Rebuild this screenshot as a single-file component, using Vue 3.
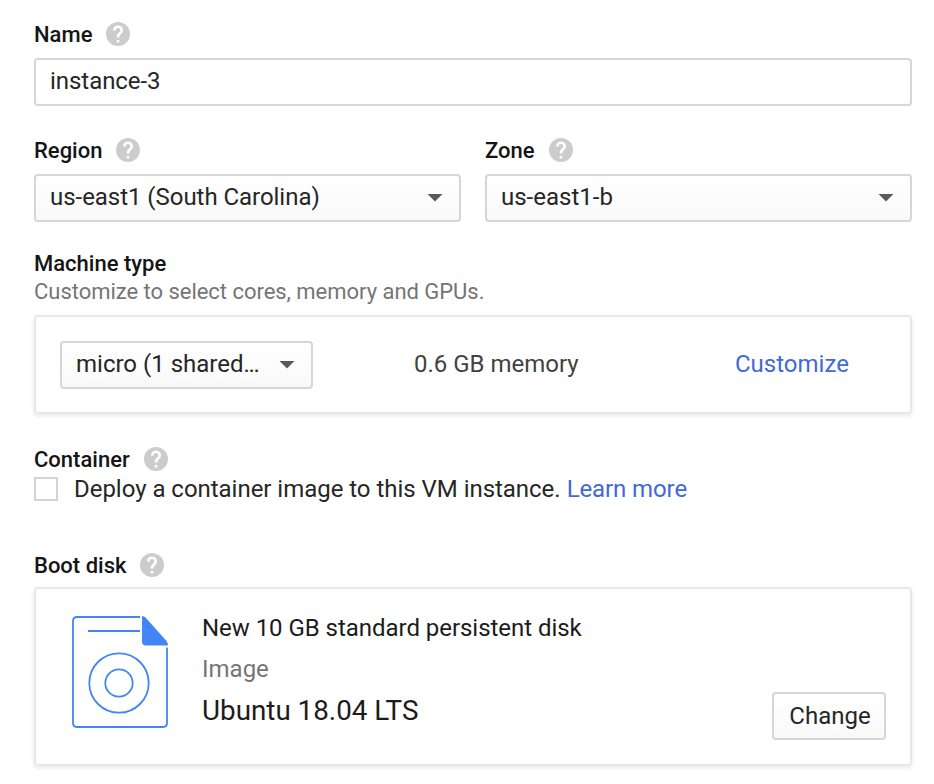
<script setup>
import { h } from 'vue'
const Help = () => h('svg', { class: 'help', viewBox: '0 0 24 24', width: 24, height: 24 }, [
  h('circle', { cx: 12, cy: 12, r: 12, fill: '#ccc' }),
  h('path', { d: 'M13.3 20.4h-2.600V18h2.600zM15.900 11.200l-1.100 1.100c-.9.9-1.400 1.600-1.400 3.300h-2.700V15c0-1.300.5-2.500 1.400-3.400l1.500-1.500c.4-.4.7-1 .7-1.700a2.300 2.300 0 0 0-4.600 0H7a5 5 0 0 1 10 0c0 1.100-.4 2.100-1.100 2.800z', fill: '#fff' })
])
</script>

<template>
  <main class="form">
    <section class="name">
      <div class="label"><span class="lt">Name</span><Help /></div>
      <div class="input"><span class="t v1">instance-3</span></div>
    </section>
    <div class="pair">
      <section>
        <div class="label"><span class="lt">Region</span><Help /></div>
        <div class="input select"><span class="t v2">us-east1 (South Carolina)</span><i class="caret"></i></div>
      </section>
      <section>
        <div class="label"><span class="lt">Zone</span><Help /></div>
        <div class="input select"><span class="t">us-east1-b</span><i class="caret"></i></div>
      </section>
    </div>
    <section class="machine">
      <div class="label"><span>Machine type</span></div>
      <div class="hint">Customize to select cores, memory and GPUs.</div>
      <div class="card mcard">
        <div class="input select micro"><span class="t">micro (1 shared<span class="dots">...</span></span><i class="caret"></i></div>
        <span class="t memory">0.6 GB memory</span>
        <a class="t customize">Customize</a>
      </div>
    </section>
    <section class="container">
      <div class="label"><span class="lt">Container</span><Help /></div>
      <div class="check"><i class="box"></i><span class="t deploy">Deploy a container image to this VM instance.</span><a class="t learn">Learn more</a></div>
    </section>
    <section class="boot">
      <div class="label"><span class="lt">Boot disk</span><Help /></div>
      <div class="card bcard">
        <svg class="disk" width="98" height="114" viewBox="0 0 98 114" fill="none" stroke="#4285f4" stroke-width="1.8">
          <path d="M69 2H6Q2 2 2 6v102q0 4 4 4h86q4 0 4-4V32.500" />
          <path d="M71 1Q73 1 74.500 2.600L95.500 26Q97 28 97 30.500H75Q71 30.500 71 26.500Z" fill="#4285f4" stroke="none" />
          <path d="M17 16h52" />
          <circle cx="48" cy="68" r="29.700" /><circle cx="48" cy="68" r="13.700" />
        </svg>
        <div class="info">
          <span class="t d1">New 10 GB standard persistent disk</span>
          <span class="t d2">Image</span>
          <span class="t d3">Ubuntu 18.04 LTS</span>
        </div>
        <button><span class="t">Change</span></button>
      </div>
    </section>
  </main>
</template>

<style>
body { margin: 0; background: #fff; }
</style>
<style scoped>
.form { box-sizing: border-box; width: 934px; height: 784px; padding: 22px 22px 0 34px; overflow: hidden; font: 24px/28px Roboto, sans-serif; color: #262626; }
.form * { box-sizing: border-box; }
.label { display: flex; align-items: center; height: 24px; gap: 14px; color: #151515; font-size: 22px; font-weight: 500; white-space: nowrap; }
.lt { padding-top: 2px; }
.help { flex: none; }
.t { white-space: nowrap; }
.input { display: flex; align-items: center; justify-content: space-between; height: 48px; margin-top: 12px; padding: 0 16px 2px 14px; border: 2px solid #d6d6d6; border-radius: 4px; background: #fff; }
.v1 { letter-spacing: -.05px; }
.v2 { letter-spacing: -.04px; }
.select { background: linear-gradient(#fff, #f9f9f9); }
.caret { width: 16px; height: 8px; margin-top: 1px; background: #5a5a5a; clip-path: polygon(0 0, 100% 0, 50% 100%); }
.pair { display: grid; grid-template-columns: 427px 427px; gap: 24px; margin-top: 32px; }
.machine { margin-top: 30px; }
.hint { height: 28px; margin-top: 2px; color: #757575; font-size: 22px; letter-spacing: -.03px; white-space: nowrap; }
.card { display: flex; border: 2px solid #e8e8e8; border-radius: 4px; box-shadow: 0 2px 5px #00000018; }
.mcard { height: 99px; margin-top: 9px; padding: 24px; align-items: flex-start; }
.micro { width: 253px; margin: 0; }
.dots { letter-spacing: -1.3px; }
.memory { width: 321px; margin: 9px 0 0 101px; color: #424242; }
.customize { margin-top: 9px; }
a { color: #4169d8; }
.container { margin-top: 33px; }
.check { display: flex; align-items: center; height: 34px; margin-top: 1px; }
.box { width: 24px; height: 24px; margin-right: 16px; border: 2px solid #d4d4d4; }
.deploy { letter-spacing: -.03px; }
.learn { margin-left: 6px; letter-spacing: -.1px; }
.boot { margin-top: 47px; }
.bcard { height: 179px; margin-top: 10px; padding: 26px 24px 24px 35px; }
.disk { flex: none; }
.info { display: flex; flex: 1; flex-direction: column; margin: -1px 0 0 33px; }
.d1 { letter-spacing: -.04px; color: #1c1c1c; }
.d2 { margin-top: 13px; color: #757575; }
.d3 { margin-top: 14px; color: #1c1c1c; font-size: 27.8px; }
button { align-self: flex-end; width: 114px; height: 48px; padding: 0 0 1px 2px; border: 2px solid #d6d6d6; border-radius: 4px; background: linear-gradient(#fff, #f9f9f9); color: #262626; font: 24px Roboto, sans-serif; }
</style>
